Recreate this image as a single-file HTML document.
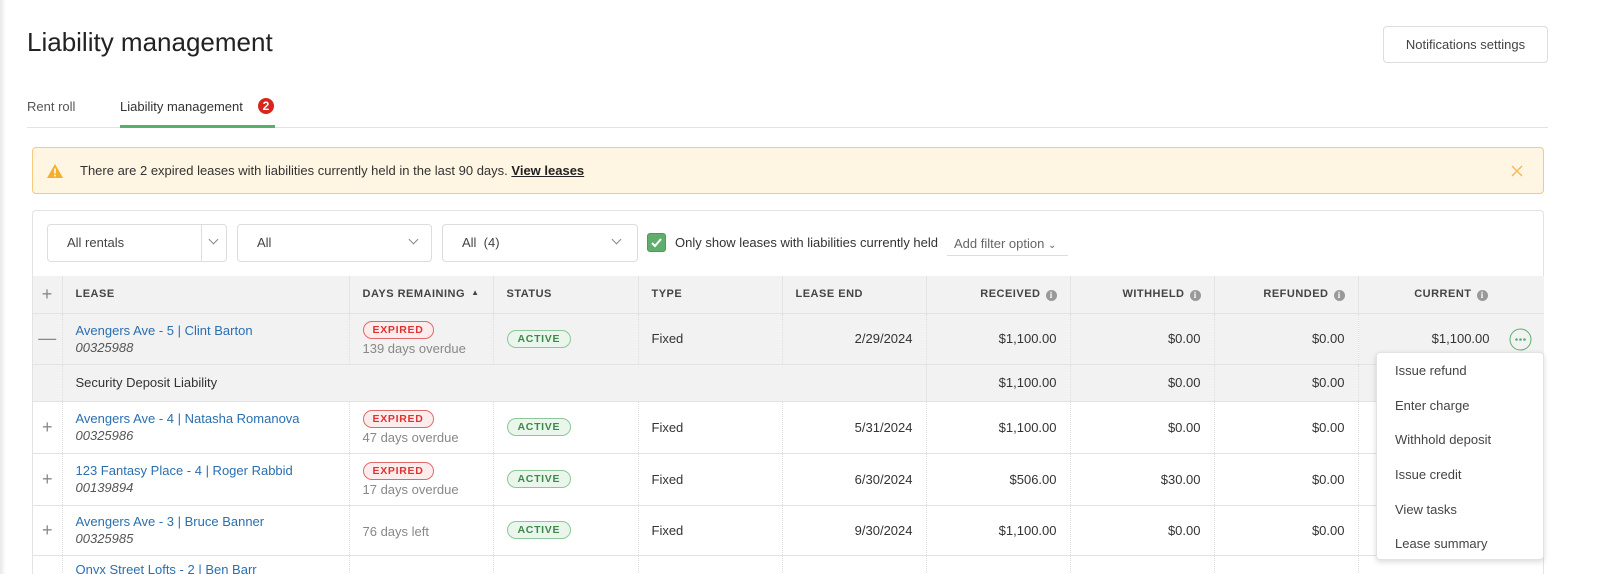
<!DOCTYPE html><html><head><meta charset="utf-8"><style>
*{box-sizing:border-box;margin:0;padding:0}
html,body{width:1600px;height:574px;overflow:hidden}
body{background:#fff;font-family:"Liberation Sans",sans-serif;color:#333;position:relative}
.edge{position:absolute;left:0;top:0;width:6px;height:574px;background:linear-gradient(90deg,#e8e8e8,#fff)}
.a{position:absolute}
h1{position:absolute;left:27px;top:27px;font-size:26px;font-weight:400;color:#222}
.btn{left:1383px;top:26px;width:165px;height:37px;border:1px solid #ddd;border-radius:4px;font-size:13px;color:#444;text-align:center;line-height:35px}
.tab{font-size:13px;top:99px;color:#555}
.banner{left:32px;top:147px;width:1512px;height:47px;background:#fef5e3;border:1px solid #f6c97c;border-radius:4px;font-size:13px;color:#333;line-height:45px;padding-left:47px}
.card{left:32px;top:210px;width:1512px;height:364px;border:1px solid #e3e3e3;border-bottom:none;border-radius:4px 4px 0 0}
.sel{top:224px;height:38px;border:1px solid #ddd;border-radius:4px;font-size:13px;color:#444;line-height:36px;padding-left:19px}
.chev{position:absolute;top:13px;width:7px;height:7px;border-right:1px solid #888;border-bottom:1px solid #888;transform:rotate(45deg)}
.wrap{position:absolute;left:33px;top:276px;width:1511px;height:298px;overflow:hidden}
table{border-collapse:collapse;table-layout:fixed;width:1511px;font-size:13px}
td,th{border-right:1px dotted #ddd;padding:0 13px;vertical-align:middle}
th{background:#f2f2f2;height:37px;font-size:11px;font-weight:700;letter-spacing:.5px;color:#444;text-align:left;border-right:1px solid #e3e3e3}
tr{border-bottom:1px solid #e3e3e3}
.r{text-align:right}
.g td{background:#f2f2f2}
a{color:#2a6fb0;text-decoration:none}
.id{font-style:italic;color:#555;margin-top:2px}
.exp{display:inline-block;border:1px solid #e06a6a;background:#fdecec;color:#d33;border-radius:9px;font-size:10.5px;font-weight:700;letter-spacing:.7px;padding:2px 9px}
.act{display:inline-block;border:1px solid #8cc79a;background:#eaf6ec;color:#3b8a4c;border-radius:9px;font-size:10.5px;font-weight:700;letter-spacing:.7px;padding:2px 10px}
.mut{color:#888;margin-top:2px}
.i{display:inline-block;width:11px;height:11px;border-radius:50%;background:#999;vertical-align:-1px;margin-left:5px;color:#fff;font-size:9px;line-height:11px;text-align:center;font-family:"Liberation Serif",serif;letter-spacing:0}
.pm{color:#888;font-size:18px;text-align:center;padding:0}
.menu{left:1376px;top:352px;width:168px;height:208px;background:#fff;border:1px solid #e3e3e3;border-radius:4px;box-shadow:0 2px 6px rgba(0,0,0,.15);font-size:13px;color:#444;padding-top:10px}
.menu div{height:34.7px;padding-left:18px;line-height:16px}
</style></head><body>
<div class="edge"></div>
<h1>Liability management</h1>
<div class="a btn">Notifications settings</div>
<div class="a tab" style="left:27px">Rent roll</div>
<div class="a tab" style="left:120px;color:#333">Liability management</div>
<div class="a" style="left:258px;top:98px;width:16px;height:16px;border-radius:50%;background:#d8261c;color:#fff;font-size:12px;font-weight:700;text-align:center;line-height:16px">2</div>
<div class="a" style="left:27px;top:127px;width:1521px;height:1px;background:#e3e3e3"></div>
<div class="a" style="left:120px;top:125px;width:155px;height:3px;background:#5aae6c"></div>
<div class="a banner">There are 2 expired leases with liabilities currently held in the last 90 days. <b style="text-decoration:underline;color:#222">View leases</b>
<svg class="a" style="left:14px;top:16px" width="16" height="14" viewBox="0 0 16 14"><path d="M8 0L16 14H0Z" fill="#f4b02c"/><rect x="7.2" y="4.5" width="1.6" height="5" fill="#fff"/><rect x="7.2" y="10.8" width="1.6" height="1.6" fill="#fff"/></svg>
<svg class="a" style="left:1478px;top:17px" width="12" height="12"><path d="M1 1L11 11M11 1L1 11" stroke="#f2b858" stroke-width="1.3"/></svg></div>
<div class="a card"></div>
<div class="a sel" style="left:47px;width:180px">All rentals<div style="position:absolute;left:153px;top:0;width:1px;height:36px;background:#ddd"></div><div class="chev" style="left:162px;top:11px"></div></div>
<div class="a sel" style="left:237px;width:195px">All<div class="chev" style="left:172px;top:11px"></div></div>
<div class="a sel" style="left:442px;width:196px">All&nbsp; (4)<div class="chev" style="left:170px;top:11px"></div></div>
<div class="a" style="left:647px;top:233px;width:19px;height:19px;border-radius:3px;background:#5fae6e;border:1px solid #4d9a5c"><svg width="17" height="17"><path d="M4 9l3 3 6-7" stroke="#fff" stroke-width="2" fill="none"/></svg></div>
<div class="a" style="left:675px;top:235px;font-size:13px;color:#333">Only show leases with liabilities currently held</div>
<div class="a" style="left:947px;top:229px;width:121px;height:27px;border-bottom:1px solid #ddd;font-size:13px;color:#666;line-height:30px;padding-left:7px">Add filter option <span style="font-size:10px">&#8964;</span></div>
<div class="wrap"><table>
<colgroup><col style="width:29px"><col style="width:287px"><col style="width:144px"><col style="width:145px"><col style="width:144px"><col style="width:144px"><col style="width:144px"><col style="width:144px"><col style="width:144px"><col style="width:186px"></colgroup>
<tr><th class="pm" style="font-weight:300">+</th><th>LEASE</th><th>DAYS REMAINING <span style="float:right;font-size:8px">&#9650;</span></th><th>STATUS</th><th>TYPE</th><th>LEASE END</th><th class="r">RECEIVED<span class="i">i</span></th><th class="r">WITHHELD<span class="i">i</span></th><th class="r">REFUNDED<span class="i">i</span></th><th style="text-align:right;padding-right:56px">CURRENT<span class="i">i</span></th></tr>
<tr class="g" style="height:51px"><td class="pm">&#8212;</td><td><a>Avengers Ave - 5 | Clint Barton</a><div class="id">00325988</div></td><td><span class="exp">EXPIRED</span><div class="mut">139 days overdue</div></td><td><span class="act">ACTIVE</span></td><td>Fixed</td><td class="r">2/29/2024</td><td class="r">$1,100.00</td><td class="r">$0.00</td><td class="r">$0.00</td><td class="r" style="padding-right:54px;position:relative">$1,100.00<svg style="position:absolute;right:12px;top:14px" width="23" height="23" viewBox="0 0 23 23"><circle cx="11.5" cy="11.5" r="10.5" fill="none" stroke="#5aae6c"/><circle cx="7.5" cy="11.5" r="1.3" fill="#5aae6c"/><circle cx="11.5" cy="11.5" r="1.3" fill="#5aae6c"/><circle cx="15.5" cy="11.5" r="1.3" fill="#5aae6c"/></svg></td></tr>
<tr class="g" style="height:37px"><td></td><td colspan="5" style="border-right:1px solid #e3e3e3">Security Deposit Liability</td><td class="r">$1,100.00</td><td class="r">$0.00</td><td class="r">$0.00</td><td></td></tr>
<tr style="height:52px"><td class="pm" style="font-weight:300">+</td><td><a>Avengers Ave - 4 | Natasha Romanova</a><div class="id">00325986</div></td><td><span class="exp">EXPIRED</span><div class="mut">47 days overdue</div></td><td><span class="act">ACTIVE</span></td><td>Fixed</td><td class="r">5/31/2024</td><td class="r">$1,100.00</td><td class="r">$0.00</td><td class="r">$0.00</td><td></td></tr>
<tr style="height:52px"><td class="pm" style="font-weight:300">+</td><td><a>123 Fantasy Place - 4 | Roger Rabbid</a><div class="id">00139894</div></td><td><span class="exp">EXPIRED</span><div class="mut">17 days overdue</div></td><td><span class="act">ACTIVE</span></td><td>Fixed</td><td class="r">6/30/2024</td><td class="r">$506.00</td><td class="r">$30.00</td><td class="r">$0.00</td><td></td></tr>
<tr style="height:50px"><td class="pm" style="font-weight:300">+</td><td><a>Avengers Ave - 3 | Bruce Banner</a><div class="id">00325985</div></td><td><div class="mut">76 days left</div></td><td><span class="act">ACTIVE</span></td><td>Fixed</td><td class="r">9/30/2024</td><td class="r">$1,100.00</td><td class="r">$0.00</td><td class="r">$0.00</td><td></td></tr>
<tr style="height:40px"><td></td><td style="vertical-align:top;padding-top:6px"><a>Onyx Street Lofts - 2 | Ben Barr</a></td><td></td><td></td><td></td><td></td><td></td><td></td><td></td><td></td></tr>
</table></div>
<div class="a menu"><div>Issue refund</div><div>Enter charge</div><div>Withhold deposit</div><div>Issue credit</div><div>View tasks</div><div>Lease summary</div></div>
</body></html>
